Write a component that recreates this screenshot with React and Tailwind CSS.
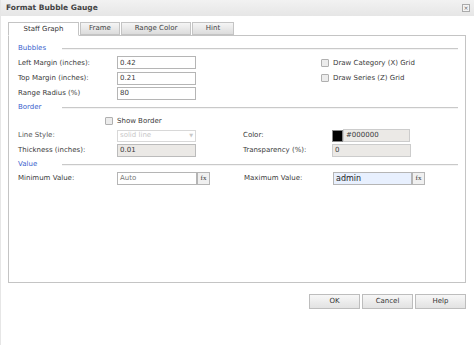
import React from "react";

const font = { fontFamily: "Verdana, 'DejaVu Sans', sans-serif" };

function Header({ text }) {
  return (
    <div className="flex items-center h-[13px]">
      <span className="text-[#3a5fcd] w-[44px]">{text}</span>
      <div className="flex-1 h-[2px] border-t border-[#c9c9c9] border-b border-b-[#f4f4f4] mr-[7px]" />
    </div>
  );
}

function Input({ value, w = "w-[79px]", className = "" }) {
  return (
    <div className={`h-[13px] ${w} border border-[#b5b5b5] flex items-center px-[2px] ${className}`}>
      {value}
    </div>
  );
}

function Fx() {
  return (
    <div className="h-[13px] w-[13px] border border-[#b5b5b5] bg-[#f0f0f0] flex items-center justify-center text-[7px] text-[#333]" style={{ fontFamily: "'Liberation Serif', serif" }}>fx</div>
  );
}

function Check({ label, className = "" }) {
  return (
    <div className={`flex items-center gap-[4px] ${className}`}>
      <div className="w-[8px] h-[8px] border border-[#b0b0b0] bg-[#ececec] rounded-[1px]" />
      <span>{label}</span>
    </div>
  );
}

function Tab({ label, active, w }) {
  return (
    <div
      className={`h-[13px] ${w} flex items-center justify-center border border-[#c4c4c4] ${
        active ? "bg-white border-b-white h-[14px] -mb-px z-10 text-[#333]" : "bg-gradient-to-b from-[#f5f5f5] to-[#dcdcdc] text-[#444]"
      }`}
    >
      {label}
    </div>
  );
}

function Btn({ label }) {
  return (
    <div className="w-[51px] h-[15px] border border-[#bdbdbd] bg-gradient-to-b from-[#f7f7f7] to-[#e2e2e2] flex items-center justify-center text-[#333]">
      {label}
    </div>
  );
}

export default function App() {
  return (
    <div className="w-[474px] h-[345px] bg-white text-[7px] text-[#3a3a3a] relative overflow-hidden border-l border-[#e6e6e6]" style={font}>
      <div className="h-[16px] bg-gradient-to-b from-[#f2f2f2] to-[#e6e6e6] flex items-center justify-between pl-[5px] pr-[4px]">
        <span className="font-bold text-[7.5px] text-[#444]">Format Bubble Gauge</span>
        <div className="w-[8px] h-[8px] border border-[#aaa] bg-[#f4f4f4] flex items-center justify-center text-[6px] leading-none text-[#666]">×</div>
      </div>
      <div className="pl-[7px] pr-[8px] pt-[6px]">
        <div className="flex items-end gap-[1px] h-[13px] relative z-10">
          <Tab label="Staff Graph" active w="w-[71px]" />
          <Tab label="Frame" w="w-[40px]" />
          <Tab label="Range Color" w="w-[70px]" />
          <Tab label="Hint" w="w-[42px]" />
        </div>
        <div className="h-[248px] border border-[#c4c4c4] pl-[9px] pt-[6px]">
          <Header text="Bubbles" />
          <div className="flex">
            <div className="w-[303px]">
              <div className="flex items-center h-[15.5px]"><span className="w-[99px]">Left Margin (inches):</span><Input value="0.42" /></div>
              <div className="flex items-center h-[15.5px]"><span className="w-[99px]">Top Margin (inches):</span><Input value="0.21" /></div>
              <div className="flex items-center h-[15px]"><span className="w-[99px]">Range Radius (%)</span><Input value="80" /></div>
            </div>
            <div>
              <div className="flex items-center h-[15.5px]"><Check label="Draw Category (X) Grid" /></div>
              <div className="flex items-center h-[15.5px]"><Check label="Draw Series (Z) Grid" /></div>
            </div>
          </div>
          <Header text="Border" />
          <div className="flex items-center h-[14px] pl-[87px]"><Check label="Show Border" /></div>
          <div className="flex items-center h-[15px]">
            <span className="w-[99px] text-[#555]">Line Style:</span>
            <div className="h-[12px] w-[79px] border border-[#d8d8d8] flex items-center justify-between px-[2px] text-[#c8c8c8]">
              <span>solid line</span><span className="text-[5px]">▼</span>
            </div>
            <span className="ml-[47px] w-[89px]">Color:</span>
            <div className="w-[11px] h-[12px] bg-black border border-[#888]" />
            <Input value="#000000" w="w-[67px]" className="bg-[#ebe9e6] border-[#ccc] h-[12px]" />
          </div>
          <div className="flex items-center h-[15px]">
            <span className="w-[99px]">Thickness (inches):</span>
            <Input value="0.01" className="bg-[#ebe9e6] border-[#bbb]" />
            <span className="ml-[47px] w-[89px]">Transparency (%):</span>
            <Input value="0" className="bg-[#ebe9e6] border-[#ccc]" />
          </div>
          <Header text="Value" />
          <div className="flex items-center h-[15px]">
            <span className="w-[99px]">Minimum Value:</span>
            <Input value="Auto" w="w-[80px]" className="text-[#777]" />
            <Fx />
            <span className="ml-[34px] w-[89px]">Maximum Value:</span>
            <Input value="admin" w="w-[79px]" className="bg-[#e8f0fe] text-[#222] text-[8px]" />
            <Fx />
          </div>
        </div>
        <div className="flex justify-end gap-[2px] mt-[11px]">
          <Btn label="OK" />
          <Btn label="Cancel" />
          <Btn label="Help" />
        </div>
      </div>
    </div>
  );
}
